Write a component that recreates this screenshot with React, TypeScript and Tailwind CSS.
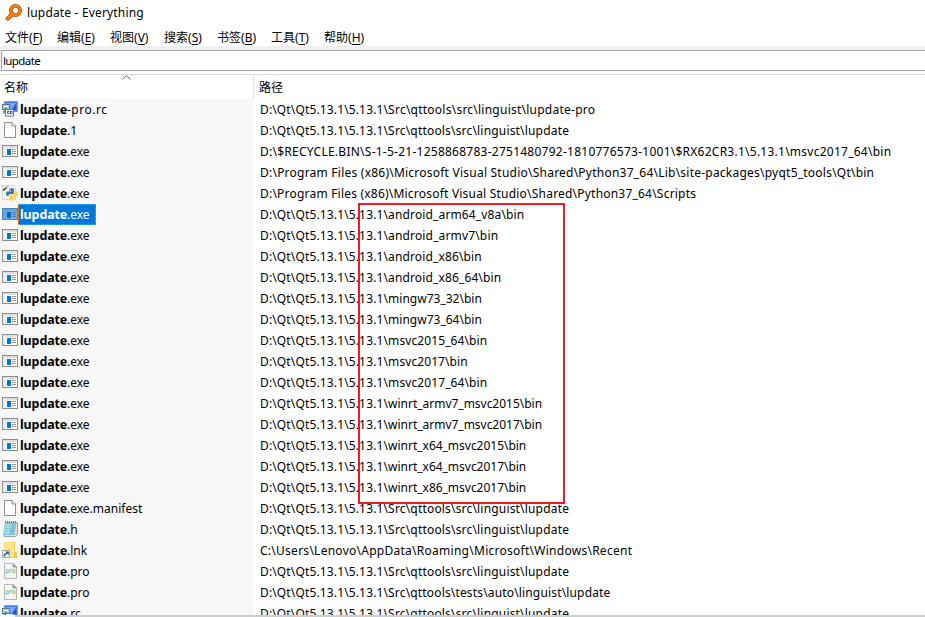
import { Fragment } from 'react';

type IconKind = 'rc' | 'blank' | 'exe' | 'python' | 'header' | 'link' | 'pro';

interface FileRow {
  icon: IconKind;
  suffix: string;
  root?: string;
  path: string;
  tracking: string;
  selected?: boolean;
}

const QT = 'D:\\Qt\\Qt5.13.1\\5.13.1\\';
const SRC = 'Src\\qttools\\src\\linguist\\lupdate';

const menus = [
  { label: '文件', hotkey: 'F', width: 'w-[52px]' },
  { label: '编辑', hotkey: 'E', width: 'w-[53px]' },
  { label: '视图', hotkey: 'V', width: 'w-[54px]' },
  { label: '搜索', hotkey: 'S', width: 'w-[53px]' },
  { label: '书签', hotkey: 'B', width: 'w-[54px]' },
  { label: '工具', hotkey: 'T', width: 'w-[53px]' },
  { label: '帮助', hotkey: 'H', width: 'w-[54px]' },
];

const rows: FileRow[] = [
  { icon: 'rc', suffix: '-pro.rc', root: QT, path: `${SRC}-pro`, tracking: 'tracking-[0.24px]' },
  { icon: 'blank', suffix: '.1', root: QT, path: SRC, tracking: 'tracking-[0.18px]' },
  {
    icon: 'exe',
    suffix: '.exe',
    path: 'D:\\$RECYCLE.BIN\\S-1-5-21-1258868783-2751480792-1810776573-1001\\$RX62CR3.1\\5.13.1\\msvc2017_64\\bin',
    tracking: 'tracking-[0.25px]',
  },
  {
    icon: 'exe',
    suffix: '.exe',
    path: 'D:\\Program Files (x86)\\Microsoft Visual Studio\\Shared\\Python37_64\\Lib\\site-packages\\pyqt5_tools\\Qt\\bin',
    tracking: 'tracking-[0.23px]',
  },
  {
    icon: 'python',
    suffix: '.exe',
    path: 'D:\\Program Files (x86)\\Microsoft Visual Studio\\Shared\\Python37_64\\Scripts',
    tracking: 'tracking-[0.21px]',
  },
  { icon: 'exe', suffix: '.exe', root: QT, path: 'android_arm64_v8a\\bin', tracking: 'tracking-[0.14px]', selected: true },
  { icon: 'exe', suffix: '.exe', root: QT, path: 'android_armv7\\bin', tracking: 'tracking-[0.15px]' },
  { icon: 'exe', suffix: '.exe', root: QT, path: 'android_x86\\bin', tracking: 'tracking-[0.13px]' },
  { icon: 'exe', suffix: '.exe', root: QT, path: 'android_x86_64\\bin', tracking: 'tracking-[0.13px]' },
  { icon: 'exe', suffix: '.exe', root: QT, path: 'mingw73_32\\bin', tracking: 'tracking-normal' },
  { icon: 'exe', suffix: '.exe', root: QT, path: 'mingw73_64\\bin', tracking: 'tracking-normal' },
  { icon: 'exe', suffix: '.exe', root: QT, path: 'msvc2015_64\\bin', tracking: 'tracking-[0.1px]' },
  { icon: 'exe', suffix: '.exe', root: QT, path: 'msvc2017\\bin', tracking: 'tracking-[0.08px]' },
  { icon: 'exe', suffix: '.exe', root: QT, path: 'msvc2017_64\\bin', tracking: 'tracking-[0.1px]' },
  { icon: 'exe', suffix: '.exe', root: QT, path: 'winrt_armv7_msvc2015\\bin', tracking: 'tracking-[-0.02px]' },
  { icon: 'exe', suffix: '.exe', root: QT, path: 'winrt_armv7_msvc2017\\bin', tracking: 'tracking-[-0.02px]' },
  { icon: 'exe', suffix: '.exe', root: QT, path: 'winrt_x64_msvc2015\\bin', tracking: 'tracking-[-0.02px]' },
  { icon: 'exe', suffix: '.exe', root: QT, path: 'winrt_x64_msvc2017\\bin', tracking: 'tracking-[-0.02px]' },
  { icon: 'exe', suffix: '.exe', root: QT, path: 'winrt_x86_msvc2017\\bin', tracking: 'tracking-[-0.02px]' },
  { icon: 'blank', suffix: '.exe.manifest', root: QT, path: SRC, tracking: 'tracking-[0.18px]' },
  { icon: 'header', suffix: '.h', root: QT, path: SRC, tracking: 'tracking-[0.18px]' },
  {
    icon: 'link',
    suffix: '.lnk',
    path: 'C:\\Users\\Lenovo\\AppData\\Roaming\\Microsoft\\Windows\\Recent',
    tracking: 'tracking-[0.265px]',
  },
  { icon: 'pro', suffix: '.pro', root: QT, path: SRC, tracking: 'tracking-[0.18px]' },
  { icon: 'pro', suffix: '.pro', root: QT, path: 'Src\\qttools\\tests\\auto\\linguist\\lupdate', tracking: 'tracking-[0.16px]' },
  { icon: 'rc', suffix: '.rc', root: QT, path: SRC, tracking: 'tracking-[0.18px]' },
];

function FileIcon({ kind, selected }: { kind: IconKind; selected?: boolean }) {
  return (
    <svg width="16" height="16" viewBox="0 0 16 16" className="mt-[2px] shrink-0">
      {kind === 'exe' && (
        <g>
          <rect x="0.5" y="2.5" width="15" height="11" fill={selected ? '#74aee0' : '#fff'} stroke={selected ? '#4b86b8' : '#8c8f90'} />
          <path d="M1 4h14" stroke={selected ? '#69a2d2' : '#dcdedf'} strokeWidth="2" />
          <path d="M2.5 4v9" stroke={selected ? '#69a2d2' : '#eceeee'} strokeWidth="3" />
          <rect x="5" y="6" width="4" height="6" fill={selected ? '#0069c4' : '#0078d7'} />
          <path d="M10 6.500h4M10 8.500h4M10 10.500h4" stroke={selected ? '#4b86b8' : '#9a9c9d'} />
        </g>
      )}
      {kind === 'blank' && (
        <g>
          <path d="M2.5 0.5h7.5l3.5 3.5v11.5h-11z" fill="#fff" stroke="#8f8f8f" />
          <path d="M10 0.5v3.5h3.5" fill="#e8e8e8" stroke="#8f8f8f" />
        </g>
      )}
      {kind === 'rc' && (
        <g>
          <rect x="2.5" y="0.5" width="13" height="10" rx="0.5" fill="#3f78e0" stroke="#8d9bb5" />
          <path d="M4 2h10L9 9H4z" fill="#7ba6f4" />
          <path d="M14 3v6h-4z" fill="#2a57c8" />
          <rect x="0.5" y="3.500" width="7" height="5" fill="#a9d2e4" stroke="#54788e" />
          <path d="M2 5.5h4" stroke="#fff" />
          <path d="M3 6l3 2.500-3 2z" fill="#2d8a3a" />
          <path d="M1 9.500h4v3H1z" fill="#6e93a6" />
          <rect x="3.500" y="8.500" width="8" height="6.500" fill="#fff" stroke="#5f7a8c" />
          <rect x="5.500" y="10.500" width="1.500" height="2" fill="none" stroke="#3d6b94" />
          <rect x="8.500" y="10.500" width="1.500" height="2" fill="none" stroke="#3d6b94" />
        </g>
      )}
      {kind === 'python' && (
        <g>
          <path d="M0.5 0.5h11l2 2v12h-13z" fill="#f4f4f2" stroke="#c4c4c1" strokeDasharray="2 1" />
          <path d="M1 5.500l3.500-3" stroke="#333" strokeWidth="1.500" />
          <path d="M4.500 2h2" stroke="#888" />
          <path d="M7 6V4.5Q7 3 9.5 3T12 4.5V8q0 1-1 1H8Q6.500 9 6.500 11H5.500Q4 11 4 8.800T5.500 6.500H9.500V6z" fill="#3774a8" />
          <path d="M12.800 6H14q2 0 2 2.700T14 11.500H10V12h3v1.500Q13 15.500 10.200 15.500T7.500 13.500V11q0-1.500 1.500-1.500h2.500Q12.800 9.500 12.800 8z" fill="#f9d33c" />
          <circle cx="8.3" cy="4.4" r="0.6" fill="#fff" />
          <circle cx="11.8" cy="14" r="0.6" fill="#fff" />
        </g>
      )}
      {kind === 'header' && (
        <g>
          <path d="M4 2h11.500v11l-2 2.500H2z" fill="#e6e3d8" stroke="#8a8d8a" strokeWidth="0.8" />
          <path d="M3 1.500h11.500L12.500 14H0.800z" fill="#7fc4d4" />
          <path d="M3 3h7L7 13H1z" fill="#a4dce6" />
          <path d="M3 5h10M2.700 7.500h10M2.300 10h10" stroke="#7fbccb" strokeWidth="0.5" />
          <path d="M3 1h12" stroke="#46565b" strokeWidth="1.500" strokeDasharray="1 1" />
        </g>
      )}
      {kind === 'link' && (
        <g>
          <path d="M2 0h10v16H2z" fill="#fbdd75" />
          <path d="M10 0h3v10h2v6h-4z" fill="#f3c84c" />
          <path d="M3 1h9v14H3z" fill="#ffe38b" />
          <rect x="0.5" y="8.5" width="7" height="7" fill="#fff" stroke="#a7a7a7" />
          <path d="M2.200 14.500q0-2.500 2.600-3" fill="none" stroke="#1a5fb0" strokeWidth="1.500" />
          <path d="M3 9.500h3.800v3.800z" fill="#1a5fb0" />
        </g>
      )}
      {kind === 'pro' && (
        <g>
          <path d="M2.500 0.500h8.500l3.500 3.500v11.500h-12z" fill="#f6f6f6" stroke="#b4b6b7" />
          <path d="M11 0.500v3.500h3.500z" fill="#8b8d8e" stroke="#a9abac" />
          <text x="3.200" y="9.500" textLength="10.500" className="fill-[#5fae45] font-['DejaVu_Sans_Mono',monospace] text-[6.5px]">
            pro
          </text>
        </g>
      )}
    </svg>
  );
}

function AppIcon() {
  return (
    <svg width="18" height="18" viewBox="0 0 18 18" className="shrink-0">
      <path d="M7 10.200L2.800 14.400" stroke="#b24a09" strokeWidth="4.200" strokeLinecap="round" />
      <circle cx="10.500" cy="6.500" r="4.600" fill="none" stroke="#b24a09" strokeWidth="3.800" />
      <path d="M7 10.200L2.800 14.400" stroke="#ff8410" strokeWidth="2.400" strokeLinecap="round" />
      <circle cx="10.500" cy="6.500" r="4.600" fill="none" stroke="#ff8410" strokeWidth="2.100" />
    </svg>
  );
}

export default function App() {
  return (
    <div className="relative flex h-[617px] w-[925px] flex-col overflow-hidden bg-white font-['Noto_Sans','Noto_Sans_CJK_SC',sans-serif] text-[12px] text-black">
      {/* Title bar */}
      <div className="flex h-[27px] items-start pt-[4px] pl-[5px]">
        <AppIcon />
        <span className="ml-1 leading-[18px] tracking-[0.17px] whitespace-nowrap">lupdate - Everything</span>
      </div>

      {/* Menu */}
      <div className="flex h-[19px] items-start pt-px pl-[5px]">
        {menus.map((menu) => (
          <div key={menu.hotkey} className={`${menu.width} shrink-0 leading-[20px] whitespace-nowrap`}>
            {menu.label}(<span className="underline underline-offset-2">{menu.hotkey}</span>)
          </div>
        ))}
      </div>

      {/* Search */}
      <div className="h-[29px] border-b border-[#dcdcdc] bg-[#f0f0f0] pt-1">
        <div className="ml-px flex h-[21px] items-center border border-r-0 border-[#a0a0a5] bg-white pl-px text-[11.5px] tracking-[-0.6px]">
          lupdate
        </div>
        <div className="h-[3px] bg-white" />
      </div>

      {/* Column headers */}
      <div className="flex h-[24px] shrink-0">
        <div className="relative w-[254px] border-r border-[#e2e2e2] pl-1 leading-[25px]">
          名称
          <svg width="9" height="5" viewBox="0 0 9 5" className="absolute top-0 left-[122px]">
            <path d="M0.500 4.500L4.500 0.700L8.500 4.500" fill="none" stroke="#6a6a6a" />
          </svg>
        </div>
        <div className="pl-[5px] leading-[25px]">路径</div>
      </div>

      {/* Results */}
      <div className="grid h-[516px] grid-cols-[253px_1fr] auto-rows-[21px] overflow-hidden">
        {rows.map((row, i) => (
          <Fragment key={i}>
            <div className="flex items-start bg-[#f7f7f7] pl-[2px]">
              <FileIcon kind={row.icon} selected={row.selected} />
              <div
                className={`flex h-[21px] items-center whitespace-nowrap ${
                  row.selected
                    ? 'border border-dotted border-[#ff8728] bg-[#0078d7] pr-[5px] pl-px text-white'
                    : 'px-[2px]'
                }`}
              >
                <b className="w-[47px] shrink-0 pt-px text-[12.5px] leading-[20px] tracking-[-0.12px]">lupdate</b>
                <span className={row.suffix === '-pro.rc' ? 'tracking-[0.5px]' : 'tracking-normal'}>
                  {row.suffix}
                </span>
              </div>
            </div>
            <div className="pl-[7px] leading-[21px] whitespace-nowrap">
              {row.root && <span className="tracking-[0.14px]">{row.root}</span>}
              <span className={row.tracking}>{row.path}</span>
            </div>
          </Fragment>
        ))}
      </div>
      <div className="ml-[15px] h-[2px] bg-[#cdcdcd]" />

      {/* Highlight frame over the matching kits */}
      <div className="absolute top-[203px] left-[358px] h-[301px] w-[207px] border-2 border-[#ed1c24]" />
    </div>
  );
}
